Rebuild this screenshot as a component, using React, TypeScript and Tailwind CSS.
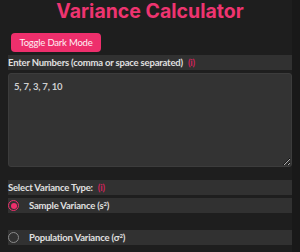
import React from "react";

export default function App() {
  return (
    <div className="min-h-[252px] w-[300px] bg-[#191919]" style={{ fontFamily: 'Lato, "Open Sans", sans-serif' }}>
      <div className="w-[292px] min-h-[252px] bg-[#1e1e1e] pl-2 flex flex-col">
        <h1
          className="text-center text-[19.5px] leading-[24px] font-bold text-[#ee3470] mt-[-1px]"
          style={{ fontFamily: 'Inter, "Open Sans", sans-serif' }}
        >
          Variance Calculator
        </h1>
        <div className="mt-[10px] pl-[3px] flex">
          <button className="h-[19px] w-[90px] rounded-[4px] bg-[#ee2f6c] text-[9.5px] tracking-[-0.2px] text-[#fff0f4] leading-[19px] text-center">
            Toggle Dark Mode
          </button>
        </div>
        <div className="mt-[3px] h-[15px] bg-[#313131] flex items-center text-[9.5px] tracking-[-0.2px] font-bold text-[#e0e0e0] leading-none">
          <span>Enter Numbers (comma or space separated)</span>
          <span className="ml-[5px] text-[#d0245c]">(i)</span>
        </div>
        <textarea
          className="mt-[3px] h-[94px] w-full resize-y rounded-[3px] border border-[#3c3c3c] bg-[#333333] px-[5px] pt-[6px] text-[9.5px] tracking-[-0.2px] font-bold text-[#cfcfcf] outline-none leading-[14px]"
          style={{ fontFamily: 'Lato, sans-serif' }}
          defaultValue="5, 7, 3, 7, 10"
        />
        <div className="mt-[13px] h-[15px] bg-[#313131] flex items-center text-[9.5px] tracking-[-0.2px] font-bold text-[#e0e0e0] leading-none">
          <span>Select Variance Type:</span>
          <span className="ml-[5px] text-[#d0245c]">(i)</span>
        </div>
        <div className="mt-[3px] h-[15px] bg-[#313131] flex items-center text-[9.5px] tracking-[-0.2px] font-bold text-[#e0e0e0] leading-none">
          <span className="w-[11px] h-[11px] rounded-full border-[1.5px] border-[#ee2f6c] flex items-center justify-center shrink-0">
            <span className="w-[6px] h-[6px] rounded-full bg-[#ee2f6c]" />
          </span>
          <span className="ml-[10px]">
            Sample Variance (s<sup className="text-[6px]">2</sup>)
          </span>
        </div>
        <div className="mt-[17px] h-[15px] bg-[#313131] flex items-center text-[9.5px] tracking-[-0.2px] font-bold text-[#e0e0e0] leading-none">
          <span className="w-[11px] h-[11px] rounded-full border-[1.5px] border-[#8a8a8a] shrink-0" />
          <span className="ml-[10px]">
            Population Variance (σ<sup className="text-[6px]">2</sup>)
          </span>
        </div>
      </div>
    </div>
  );
}
